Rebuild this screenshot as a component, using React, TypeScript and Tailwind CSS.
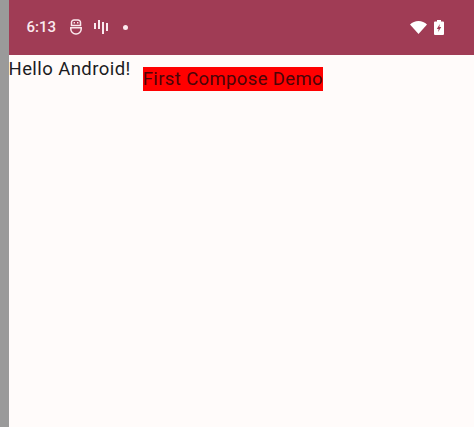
export default function App() {
  return (
    <div className="flex h-[427px] w-[474px] overflow-hidden bg-[#fffbfa] font-['Roboto',sans-serif] text-[#1c1b1f]">
      <div className="w-[8.5px] shrink-0 bg-[#9a9a9a]" />
      <div className="flex min-w-0 flex-1 flex-col">
        <header className="flex h-[55px] shrink-0 items-center bg-[#a03c55] pl-[18px] pr-[30px] pb-[1px] text-[#fbe9ee]">
          <span className="w-[28px] text-[15px] font-medium leading-none">6:13</span>
          <svg className="ml-[15px]" width="12" height="16" viewBox="0 0 12 16" fill="none" stroke="currentColor" strokeWidth="1.5">
            <path d="M1.5 6.5V3.5A2.5 2.5 0 0 1 4 1h4a2.5 2.5 0 0 1 2.5 2.5v3z" />
            <path d="M3.6 3.8h1.4M7 3.8h1.4" strokeWidth="1.6" />
            <path d="M.8 8.8h10.4V10a5 5 0 0 1-5 5h-.4a5 5 0 0 1-5-5z" />
          </svg>
          <svg className="ml-[12px]" width="14" height="14" viewBox="0 0 14 14" fill="currentColor">
            <rect x="0" y="3" width="2" height="6" />
            <rect x="4" y="0" width="2" height="9" />
            <rect x="8" y="2" width="2" height="12" />
            <rect x="12" y="3" width="2" height="8" />
          </svg>
          <span className="ml-[15px] size-[5px] rounded-full bg-current" />
          <div className="ml-auto flex items-center gap-[7px]">
            <svg width="17" height="13" viewBox="0 0 17 13" fill="white">
              <path d="M8.5 13 0 3.6C2.3 1.4 5.2 0 8.5 0S14.7 1.4 17 3.6z" />
            </svg>
            <svg width="10" height="15" viewBox="0 0 10 15">
              <path fill="white" d="M3 0h4v1.5h2a1 1 0 0 1 1 1V14a1 1 0 0 1-1 1H1a1 1 0 0 1-1-1V2.5a1 1 0 0 1 1-1h2z" />
              <path fill="#a03c55" d="M5.8 4 2.8 9h1.8l-.4 3 3-5H5.4z" />
            </svg>
          </div>
        </header>
        <main className="flex items-start">
          <p className="text-[18.5px] leading-[28px] tracking-[0.43px]">Hello Android!</p>
          <p className="ml-[12px] mt-[12px] bg-[#ff0000] pt-[1px] text-[18.5px] leading-[23px] tracking-[0.37px] text-[#4a0508]">First Compose Demo</p>
        </main>
      </div>
    </div>
  );
}
